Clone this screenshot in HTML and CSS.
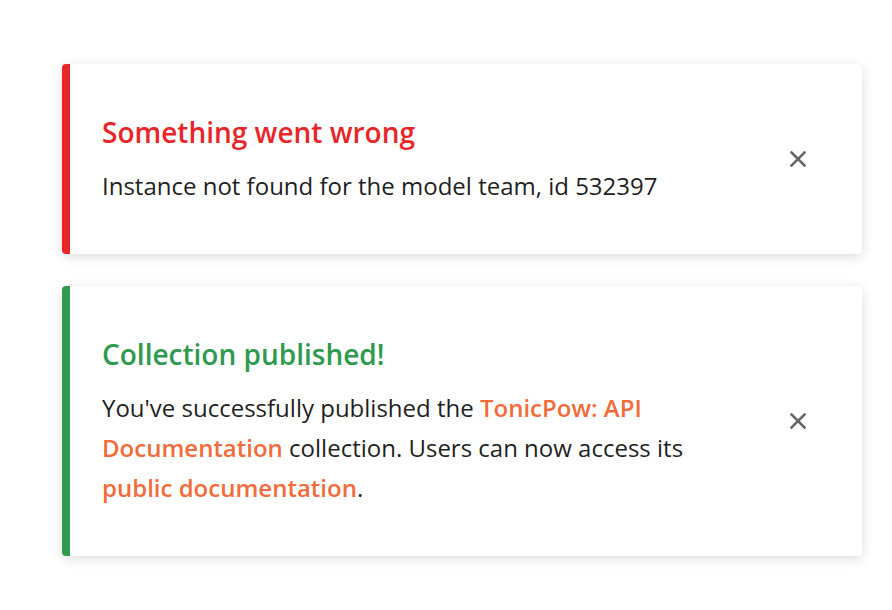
FILE: index.html
```html
<!DOCTYPE html>
<html>
<head>
<meta charset="utf-8">
<link rel="stylesheet" href="styles.css">
</head>
<body>
<div class="stack">
  <div class="toast toast-error">
    <div class="content">
      <div class="title">Something went wrong</div>
      <div class="body">Instance not found for the model team, id 532397</div>
    </div>
    <button class="close" aria-label="Close">
      <svg width="16" height="16" viewBox="0 0 16 16"><path d="M1.5 1.5L14.5 14.5M14.5 1.5L1.5 14.5" stroke="#666666" stroke-width="2.5" stroke-linecap="square"/></svg>
    </button>
  </div>
  <div class="toast toast-success">
    <div class="content">
      <div class="title">Collection published!</div>
      <div class="body">You've successfully published the <a class="link" href="#">TonicPow: API Documentation</a> collection. Users can now access its <a class="link" href="#">public documentation</a>.</div>
    </div>
    <button class="close" aria-label="Close">
      <svg width="16" height="16" viewBox="0 0 16 16"><path d="M1.5 1.5L14.5 14.5M14.5 1.5L1.5 14.5" stroke="#666666" stroke-width="2.5" stroke-linecap="square"/></svg>
    </button>
  </div>
</div>
</body>
</html>
```
FILE: styles.css
```css
html, body {
  margin: 0;
  padding: 0;
  background: #ffffff;
}
body {
  font-family: "Open Sans", "Noto Sans", sans-serif;
  color: #1f1f1f;
}
.stack {
  padding: 64px 0 48px 62px;
  width: 800px;
  display: flex;
  flex-direction: column;
  gap: 32px;
}
.toast {
  display: flex;
  align-items: center;
  background: #fff;
  border-radius: 4px;
  border-left: 8px solid;
  box-shadow: 0 3px 12px rgba(0, 0, 0, 0.14);
  padding: 48px 56px 48px 32px;
}
.toast-error { border-left-color: #e8262a; }
.toast-success { border-left-color: #2f9a4f; }
.content {
  flex: 1;
  min-width: 0;
}
.title {
  font-size: 28px;
  line-height: 40px;
  font-weight: 600;
  margin-bottom: 14px;
}
.toast-error .title { color: #e8262a; }
.toast-success .title { color: #2f9a4f; }
.body {
  font-size: 24px;
  line-height: 40px;
}
.link {
  color: #f26b3a;
  font-weight: 600;
  text-decoration: none;
}
.close {
  flex: none;
  width: 16px;
  height: 16px;
  padding: 0;
  margin-left: 48px;
  border: 0;
  background: none;
  display: flex;
}
```
